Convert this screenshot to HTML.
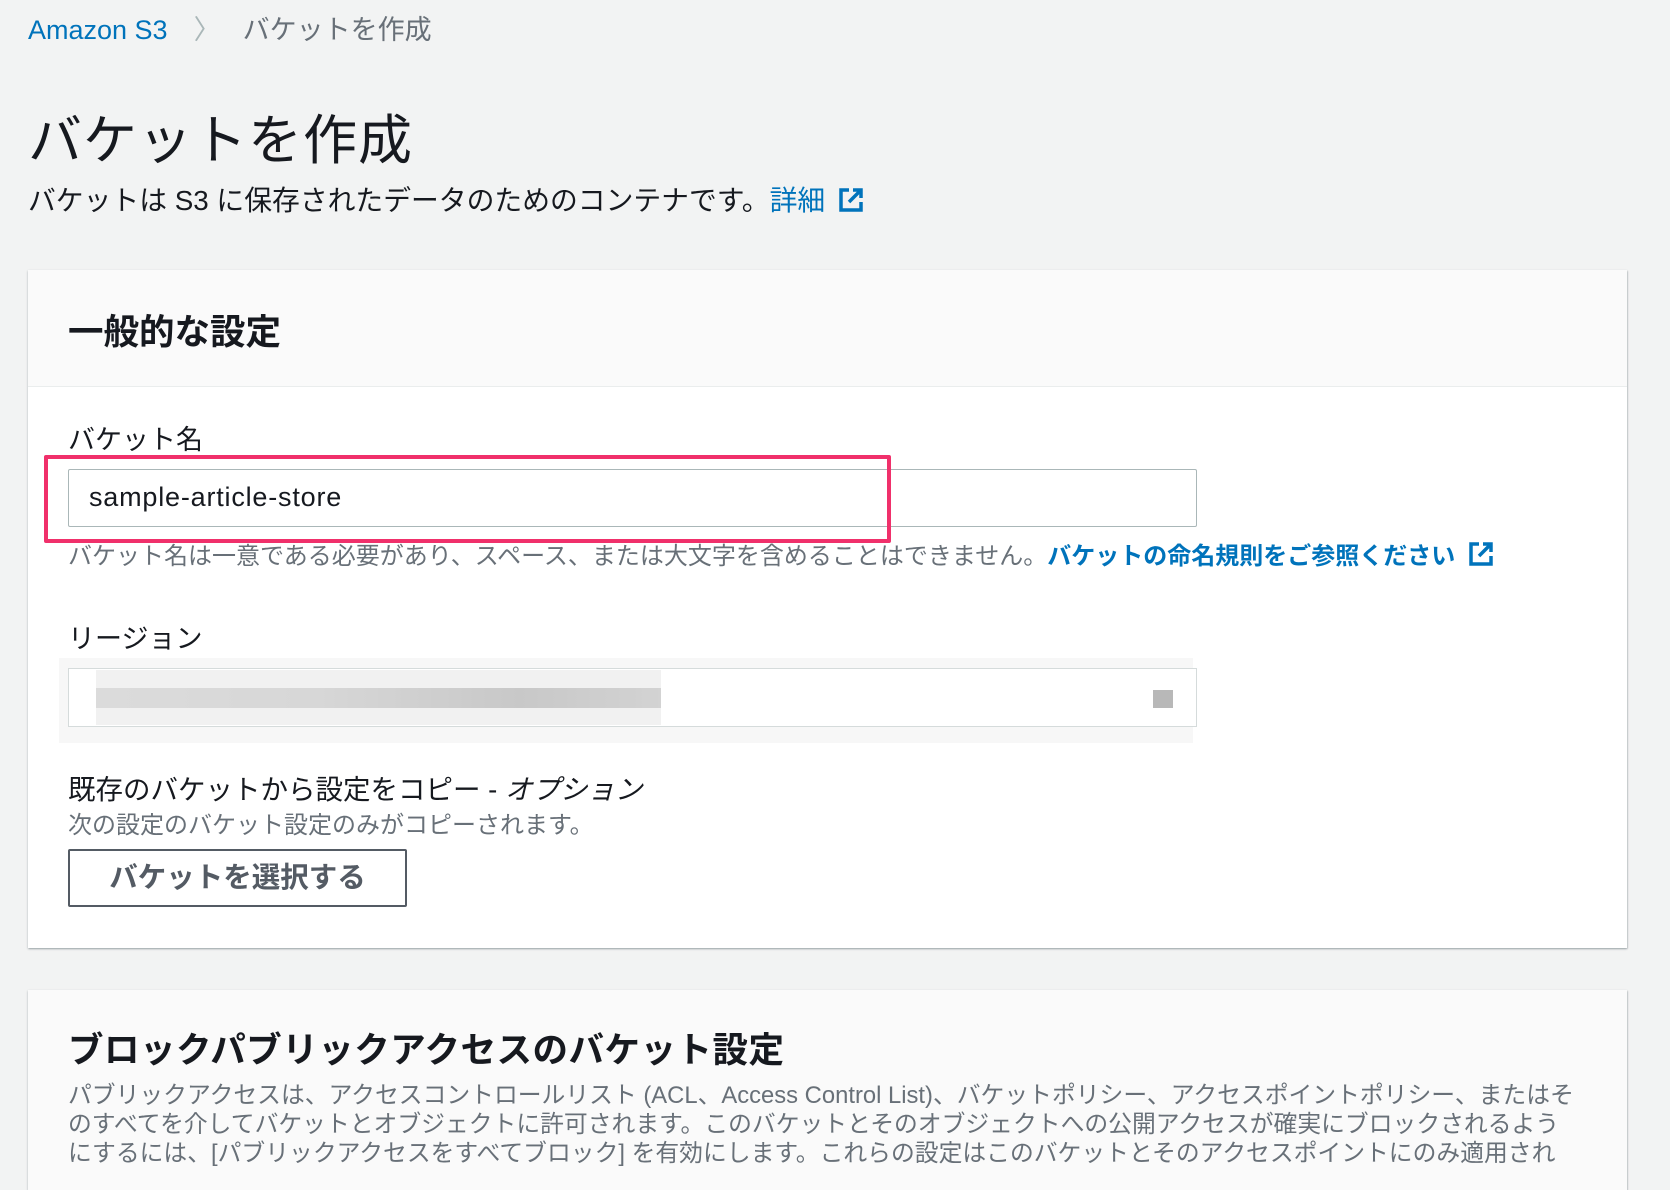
<!DOCTYPE html>
<html><head><meta charset="utf-8"><style>
*{margin:0;padding:0;box-sizing:border-box}
body{width:1670px;height:1168px;overflow:hidden;background:#f2f3f3;font-family:"Liberation Sans","Noto Sans CJK JP",sans-serif;color:#16191f;position:relative}
.a{position:absolute;white-space:nowrap}
.card{position:absolute;left:28px;width:1599px;background:#fff;box-shadow:0 1px 2px rgba(0,28,36,.3),1px 1px 1px rgba(0,28,36,.1)}
.blue{color:#0073bb}
.ext{display:inline-block;vertical-align:-4px;margin-left:12px}
</style></head><body>
<div class="a" style="left:28px;top:8px;font-size:27px"><span class="blue">Amazon S3</span><span style="color:#aab7b8;margin:0 22px 0 26px">〉</span><span style="color:#687078">バケットを作成</span></div>
<div class="a" style="left:28px;top:96px;font-size:54px;letter-spacing:1px">バケットを作成</div>
<div class="a" style="left:28px;top:179px;font-size:27.8px">バケットは S3 に保存されたデータのためのコンテナです。<span class="blue">詳細<svg class="ext" width="28" height="28" viewBox="0 0 28 28"><path d="M12 4H4v20h20v-8" fill="none" stroke="#0073bb" stroke-width="3.5"/><path d="M16 4h8v8M24 4L12 16" fill="none" stroke="#0073bb" stroke-width="3.5"/></svg></span></div>

<div class="card" style="top:270px;height:678px">
 <div style="height:117px;background:#fafafa;border-bottom:1px solid #eaeded"></div>
 <div class="a" style="left:40px;top:34px;font-size:35.5px;font-weight:bold">一般的な設定</div>
 <div class="a" style="left:40px;top:148px;font-size:27px">バケット名</div>
 <div class="a" style="left:40px;top:199px;width:1129px;height:58px;border:1px solid #aab7b8;border-radius:2px;font-size:27px;letter-spacing:.8px;padding:12px 20px">sample-article-store</div>
 <div class="a" style="left:16px;top:185px;width:847px;height:88px;border:4px solid #f0306b;border-radius:2px"></div>
 <div class="a" style="left:40px;top:266px;font-size:24px;color:#687078">バケット名は一意である必要があり、スペース、または大文字を含めることはできません。<span class="blue" style="font-weight:bold">バケットの命名規則をご参照ください<svg class="ext" width="28" height="28" viewBox="0 0 28 28"><path d="M12 4H4v20h20v-8" fill="none" stroke="#0073bb" stroke-width="3.5"/><path d="M16 4h8v8M24 4L12 16" fill="none" stroke="#0073bb" stroke-width="3.5"/></svg></span></div>
 <div class="a" style="left:40px;top:347px;font-size:27px">リージョン</div>
 <div class="a" style="left:31px;top:388px;width:1134px;height:85px;background:#f7f7f7"></div>
 <div class="a" style="left:40px;top:398px;width:1129px;height:59px;border:1px solid #d5dbdb;background:#fff"></div>
 <div class="a" style="left:68px;top:418px;width:565px;height:20px;background:linear-gradient(90deg,#d8d8d8,#cfcfcf 40%,#b5b5b5 75%,#c8c8c8)"></div>
 <div class="a" style="left:68px;top:400px;width:565px;height:55px;background:rgba(225,225,225,.45)"></div>
 <div class="a" style="left:1125px;top:420px;width:20px;height:18px;background:#b8b8b8"></div>
 <div class="a" style="left:40px;top:497px;font-size:27.5px">既存のバケットから設定をコピー - <i>オプション</i></div>
 <div class="a" style="left:40px;top:535px;font-size:24px;color:#687078">次の設定のバケット設定のみがコピーされます。</div>
 <div class="a" style="left:40px;top:579px;width:339px;height:58px;border:2px solid #545b64;border-radius:2px;font-size:28.5px;font-weight:bold;color:#545b64;text-align:center;line-height:54px">バケットを選択する</div>
</div>

<div class="card" style="top:990px;height:200px;background:#fafafa">
 <div class="a" style="left:40px;top:32px;font-size:35.5px;font-weight:bold;letter-spacing:.5px">ブロックパブリックアクセスのバケット設定</div>
 <div class="a" style="left:40px;top:91px;font-size:23.8px;line-height:29px;color:#687078">パブリックアクセスは、アクセスコントロールリスト (ACL、Access Control List)、バケットポリシー、アクセスポイントポリシー、またはそ<br>のすべてを介してバケットとオブジェクトに許可されます。このバケットとそのオブジェクトへの公開アクセスが確実にブロックされるよう<br>にするには、[パブリックアクセスをすべてブロック] を有効にします。これらの設定はこのバケットとそのアクセスポイントにのみ適用され</div>
</div>
</body></html>
